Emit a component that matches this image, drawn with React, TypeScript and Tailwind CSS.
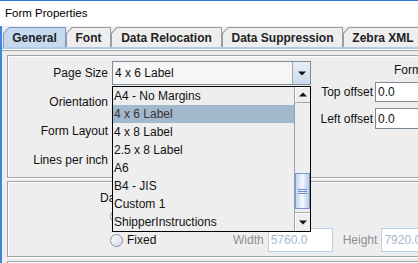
const pageSizes = [
  'A4 - No Margins',
  '4 x 6 Label',
  '4 x 8 Label',
  '2.5 x 8 Label',
  'A6',
  'B4 - JIS',
  'Custom 1',
  'ShipperInstructions',
];

function Tab({ label, className, selected = false }: { label: string; className: string; selected?: boolean }) {
  return (
    <div
      className={`h-[20px] shrink-0 p-[1px] pb-0 [clip-path:polygon(6px_0,100%_0,100%_100%,0_100%,0_6px)] ${
        selected ? 'bg-[#7d99cc]' : 'bg-[#9c9c9c]'
      } ${className}`}
    >
      <div
        className={`h-full flex items-center justify-center text-[12px] font-bold text-[#222] [clip-path:polygon(5.4px_0,100%_0,100%_100%,0_100%,0_5.4px)] ${
          selected ? 'bg-[#c6d9ee]' : 'bg-[#eeeeee]'
        }`}
      >
        {label}
      </div>
    </div>
  );
}

function Arrow({ up = false }: { up?: boolean }) {
  return (
    <svg width="8" height="5" viewBox="0 0 8 5">
      <path d={up ? 'M0 4.5 L4 0.5 L8 4.5 Z' : 'M0 0.5 L8 0.5 L4 4.5 Z'} fill="#111" />
    </svg>
  );
}

function Field({ value, className, disabled = false }: { value: string; className: string; disabled?: boolean }) {
  return (
    <div
      className={`bg-white border flex items-center pl-[2px] text-[12px] shrink-0 ${
        disabled ? 'border-[#b8cfe5] text-[#a6b8cc]' : 'border-[#7a8a99] text-[#111]'
      } ${className}`}
    >
      {value}
    </div>
  );
}

function Radio() {
  return <div className="w-[13px] h-[13px] shrink-0 rounded-full border border-[#8090a6] bg-linear-to-br from-white to-[#d6dbe2]" />;
}

export default function App() {
  return (
    <div className="relative w-[418px] h-[263px] overflow-hidden flex flex-col font-['Liberation_Sans',Arial,sans-serif] text-[#111]">
      {/* Title bar */}
      <div className="h-[26px] shrink-0 bg-white border-t border-[#2b78d4] flex items-center pl-[5px] text-[11.5px] text-black">
        Form Properties
      </div>

      {/* Window body */}
      <div className="flex-1 bg-[#eeeeee] border-l-2 border-[#3f86dc] flex flex-col overflow-hidden">
        <div className="h-[21px] shrink-0 flex pl-[1px] pt-[1px]">
          <Tab label="General" className="w-[63px]" selected />
          <Tab label="Font" className="w-[45px]" />
          <Tab label="Data Relocation" className="w-[111px]" />
          <Tab label="Data Suppression" className="w-[121px]" />
          <Tab label="Zebra XML" className="w-[80px]" />
        </div>
        <div className="h-[2px] shrink-0 bg-[#b4cbe8]" />
        <div className="h-[1px] shrink-0 bg-white" />
        <div className="h-[1px] shrink-0 bg-[#a3a3a3]" />

        <div className="shrink-0 pl-[5px] pt-[4px] flex flex-col">
          {/* Page panel */}
          <div className="w-[430px] h-[123px] shrink-0 border border-[#a3a3a3] shadow-[inset_1px_1px_0_#fff,1px_1px_0_#fff] flex">
            <div className="shrink-0 pt-[5px] flex flex-col gap-[5px]">
              <div className="h-[24px] flex items-center">
                <div className="w-[100px] text-right text-[12px]">Page Size</div>
                <div className="ml-[4px] w-[199px] h-[24px] border border-[#7a8a99] bg-[#f6f6f6] flex">
                  <div className="flex-1 flex items-center pl-[2px] text-[12px]">4 x 6 Label</div>
                  <div className="w-[18px] border-l border-[#a0a8b4] bg-linear-to-b from-[#e8eff8] to-[#cddbeb] flex items-center justify-center">
                    <Arrow />
                  </div>
                </div>
              </div>
              <div className="h-[24px] flex items-center">
                <div className="w-[100px] text-right text-[12px]">Orientation</div>
                <div className="ml-[4px] w-[199px]" />
              </div>
              <div className="h-[24px] flex items-center">
                <div className="w-[100px] text-right text-[12px]">Form Layout</div>
                <div className="ml-[4px] w-[199px]" />
              </div>
              <div className="h-[24px] flex items-center">
                <div className="w-[100px] text-right text-[12px]">Lines per inch</div>
                <div className="ml-[4px] w-[199px]" />
              </div>
            </div>

            <div className="shrink-0 ml-[7px] pt-[7px] flex flex-col">
              <div className="h-[14px] leading-[14px] pl-[76px] text-[12px] whitespace-nowrap">Form Offset</div>
              <div className="mt-[5px] h-[20px] flex items-center">
                <div className="w-[55px] text-right text-[12px] whitespace-nowrap">Top offset</div>
                <Field value="0.0" className="ml-[2px] w-[60px] h-[20px]" />
              </div>
              <div className="mt-[6px] h-[21px] flex items-center">
                <div className="w-[55px] text-right text-[12px] whitespace-nowrap">Left offset</div>
                <Field value="0.0" className="ml-[2px] w-[60px] h-[21px]" />
              </div>
            </div>
          </div>

          {/* Data panel */}
          <div className="mt-[3px] w-[430px] h-[76px] shrink-0 border border-[#a3a3a3] shadow-[inset_1px_1px_0_#fff,1px_1px_0_#fff] flex flex-col pt-[9px]">
            <div className="h-[14px] leading-[14px] ml-[92px] text-[12px]">Data</div>
            <div className="h-[23px] flex items-center">
              <div className="ml-[102px]">
                <Radio />
              </div>
            </div>
            <div className="h-[24px] flex items-center">
              <div className="ml-[102px] shrink-0">
                <Radio />
              </div>
              <div className="ml-[4px] w-[106px] shrink-0 text-[12px]">Fixed</div>
              <div className="shrink-0 text-[12px] text-[#8e8e8e]">Width</div>
              <Field value="5760.0" className="ml-[4px] w-[65px] h-[24px]" disabled />
              <div className="ml-[10px] shrink-0 text-[12px] text-[#8e8e8e]">Height</div>
              <Field value="7920.0" className="ml-[4px] w-[65px] h-[24px]" disabled />
            </div>
          </div>

          <div className="mt-[4px] w-[430px] h-[20px] shrink-0 border border-[#a3a3a3] shadow-[inset_1px_1px_0_#fff]" />
        </div>
      </div>

      {/* Page size dropdown list */}
      <div className="absolute left-[112px] top-[86px] w-[199px] h-[146px] border border-black bg-[#eeeeee] flex">
        <div className="flex-1 flex flex-col">
          {pageSizes.map((size, i) => (
            <div
              key={size}
              className={`h-[18px] leading-[18px] pl-[1px] text-[12px] whitespace-nowrap overflow-hidden ${
                i === 1 ? 'bg-[#a3b8cc] text-[#333]' : 'text-[#111]'
              }`}
            >
              {size}
            </div>
          ))}
        </div>
        <div className="w-[16px] flex flex-col border-l border-[#98a2b0]">
          <div className="h-[16px] border-b border-[#a8a8a8] shadow-[inset_1px_1px_0_#fff] flex items-center justify-center">
            <Arrow up />
          </div>
          <div className="flex-1 flex flex-col">
            <div className="flex-1" />
            <div className="h-[36px] border border-[#7a96cc] bg-linear-to-r from-[#c3d5ee] via-[#f4f8fd] to-[#b6cbe6] flex flex-col items-center justify-center gap-[1px]">
              <div className="w-[9px] h-[1px] bg-[#6f8cc4]" />
              <div className="w-[9px] h-[1px] bg-[#6f8cc4]" />
              <div className="w-[9px] h-[1px] bg-[#6f8cc4]" />
            </div>
            <div className="h-[3px]" />
          </div>
          <div className="h-[19px] border-t border-[#a8a8a8] shadow-[inset_1px_1px_0_#fff] flex items-center justify-center">
            <Arrow />
          </div>
        </div>
      </div>
    </div>
  );
}
